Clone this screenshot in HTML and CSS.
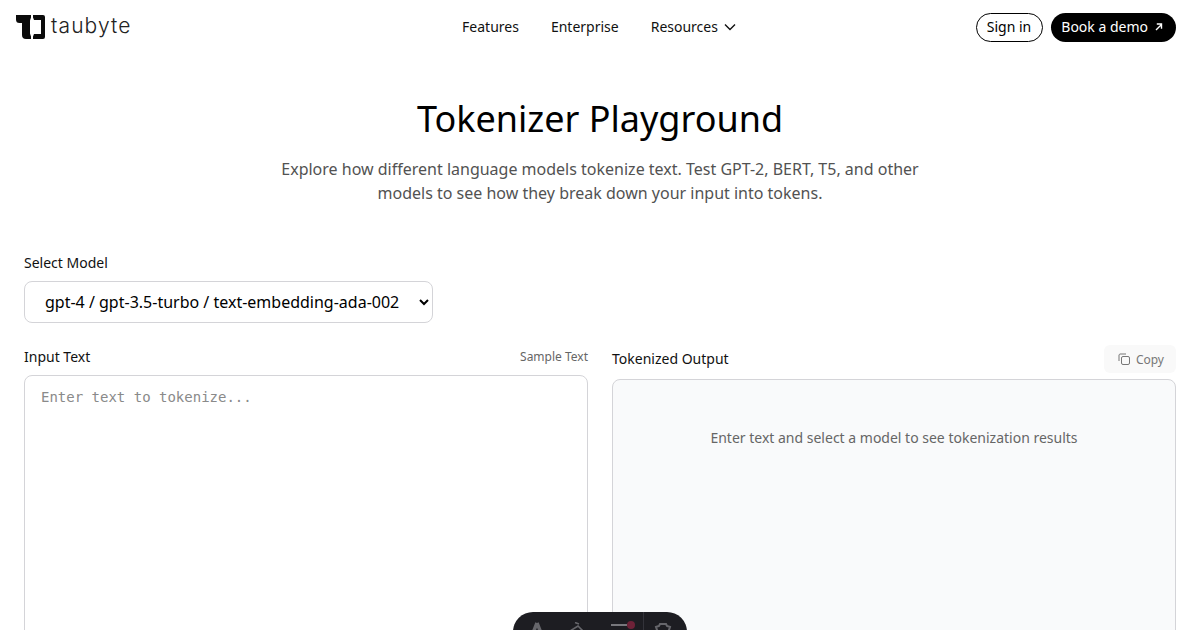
FILE: index.html
```
<!DOCTYPE html>
<html lang="en">
<head>
<meta charset="utf-8">
<title>Tokenizer Playground</title>
<link rel="stylesheet" href="styles.css">
</head>
<body>
<header class="nav">
  <a class="brand" href="#">
    <svg class="brand-mark" width="29" height="24" viewBox="0 0 29 24"><path fill="#0b0b0b" fill-rule="evenodd" d="M0 0h15v2.500l-1 3v13l1 3V24H10a4 4 0 0 1-4-4V8H3.500A3.500 3.500 0 0 1 0 4.500zM17 0h10a2 2 0 0 1 2 2v20a2 2 0 0 1-2 2H17v-2.500l1-2.500h7V5h-7l-1-2.500z"/></svg>
    <span class="brand-name">taubyte</span>
  </a>
  <nav class="links">
    <a href="#">Features</a>
    <a href="#">Enterprise</a>
    <a href="#" class="res">Resources
      <svg class="nudge" width="12" height="8" viewBox="0 0 12 8"><path d="M1 1.500l5 5 5-5" fill="none" stroke="#111" stroke-width="1.400"/></svg>
    </a>
  </nav>
  <div class="actions">
    <a class="btn outline" href="#">Sign in</a>
    <a class="btn solid" href="#">Book a demo
      <svg class="nudge" width="8" height="8" viewBox="0 0 8 8"><path d="M1 7l5.500-5.500M1.800 1h4.700v4.700" fill="none" stroke="#fff" stroke-width="1.400"/></svg>
    </a>
  </div>
</header>
<main class="main">
  <section class="hero">
    <h1>Tokenizer Playground</h1>
    <p>Explore how different language models tokenize text. Test GPT-2, BERT, T5, and other models to see how they break down your input into tokens.</p>
  </section>
  <section class="model">
    <label class="label" for="model">Select Model</label>
    <select id="model"><option>gpt-4 / gpt-3.5-turbo / text-embedding-ada-002</option></select>
  </section>
  <section class="cols">
    <div class="col">
      <div class="col-head in">
        <label class="label" for="inp">Input Text</label>
        <button class="sample">Sample Text</button>
      </div>
      <textarea id="inp" placeholder="Enter text to tokenize..."></textarea>
    </div>
    <div class="col">
      <div class="col-head">
        <span class="label">Tokenized Output</span>
        <button class="copy">
          <svg width="12" height="12" viewBox="0 0 12 12"><rect x="3.500" y="3.500" width="8" height="8" rx="1.500" fill="none" stroke="#777"/><path d="M1 8V2a1.500 1.500 0 0 1 1-1h6" fill="none" stroke="#777"/></svg>
          Copy
        </button>
      </div>
      <div class="output">Enter text and select a model to see tokenization results</div>
    </div>
  </section>
</main>
<div class="dock">
  <svg class="d1" width="18" height="16" viewBox="0 0 18 16"><path d="M9 1L3 16M9 1l6 15" stroke="#66666b" stroke-width="3.500" fill="none"/></svg>
  <svg class="d2" width="18" height="16" viewBox="0 0 18 16"><path d="M1 9L9 4l6 6M6 .5l4 1.500" stroke="#66666b" stroke-width="1.600" fill="none"/></svg>
  <span class="d3"><i></i><b></b></span>
  <span class="sep"></span>
  <svg class="d4" width="18" height="16" viewBox="0 0 18 16"><path d="M6 2h6l1 2 3 1-1 3v8H3V8L2 5l3-1z" stroke="#66666b" stroke-width="2" fill="none"/></svg>
</div>
</body>
</html>
```
FILE: styles.css
```
* { box-sizing: border-box; }
html, body { margin: 0; height: 630px; overflow: hidden; }
body { font-family: "Noto Sans", sans-serif; color: #000; background: #fff; position: relative; }
a { color: inherit; text-decoration: none; }
.nav { display: grid; grid-template-columns: 1fr auto 1fr; align-items: center; height: 54px; padding: 0 24px; }
.brand { display: flex; align-items: center; gap: 6px; margin-left: -8px; }
.brand-mark { display: block; }
.brand-name { font-family: "Inter", sans-serif; font-weight: 300; font-size: 21px; line-height: 24px; letter-spacing: 1.1px; color: #222; position: relative; top: -1px; }
.links { display: flex; gap: 32px; font-size: 14px; color: #111; padding-bottom: 2px; margin-right: 2px; }
.res { display: flex; align-items: center; gap: 6px; }
.nudge { margin-top: 2px; }
.actions { display: flex; justify-content: flex-end; gap: 8px; }
.btn { display: flex; align-items: center; height: 29px; border-radius: 15px; font-size: 14px; padding: 0 10px 2px; }
.outline { border: 1px solid #000; padding-right: 11px; }
.solid { background: #000; color: #fff; gap: 7px; padding-right: 13px; }
.main { padding: 0 24px; }
.hero { text-align: center; }
h1 { margin: 40px 0 0; font-size: 36px; line-height: 50px; font-weight: 400; }
.hero p { margin: 13px auto 0; max-width: 672px; font-size: 16px; line-height: 24px; color: #525252; }
.model { margin-top: 48px; }
.label { display: block; font-size: 14px; line-height: 20px; color: #111; }
select { display: block; width: 409px; height: 42px; margin-top: 8px; padding: 0 16px; font: 16px "Noto Sans", sans-serif; color: #000; background: #fff; border: 1px solid #d4d4d8; border-radius: 8px; }
.cols { display: grid; grid-template-columns: 1fr 1fr; gap: 24px; margin-top: 22px; }
.col-head { display: flex; justify-content: space-between; align-items: center; height: 28px; margin-bottom: 6px; }
.col-head.in { height: 24px; }
.sample { border: 0; background: none; padding: 0 0 2px; font: 12px "Noto Sans", sans-serif; color: #666; }
.copy { display: flex; align-items: center; gap: 6px; height: 28px; padding: 0 12px 0 14px; border: 0; border-radius: 6px; background: #f9f9f9; font: 12px "Noto Sans", sans-serif; color: #777; }
textarea { display: block; width: 100%; height: 400px; padding: 11px 16px; font: 14px/20px "DejaVu Sans Mono", monospace; border: 1px solid #d4d4d8; border-radius: 8px; resize: none; background: #fff; }
textarea::placeholder { color: #8a8a8a; }
.output { height: 400px; padding: 48px 16px 0; text-align: center; font-size: 14px; line-height: 20px; color: #666; background: #f9fafb; border: 1px solid #d4d4d8; border-radius: 8px; }
.dock { position: absolute; left: 513px; top: 612px; width: 174px; height: 40px; border-radius: 20px; background: #1d1d22; display: flex; align-items: flex-start; padding: 10px 0 0 15px; }
.d1 { margin-right: 23px; }
.d2 { margin-right: 24px; }
.d3 { position: relative; display: block; width: 24px; margin-right: 8px; }
.d3 i { position: absolute; left: 0; top: 2px; width: 16px; height: 2px; background: #77777c; }
.d3 b { position: absolute; left: 16px; top: -1px; width: 8px; height: 8px; border-radius: 50%; background: #6e2238; }
.sep { width: 1px; height: 30px; margin-top: -10px; background: #33333a; margin-right: 10px; }
```
